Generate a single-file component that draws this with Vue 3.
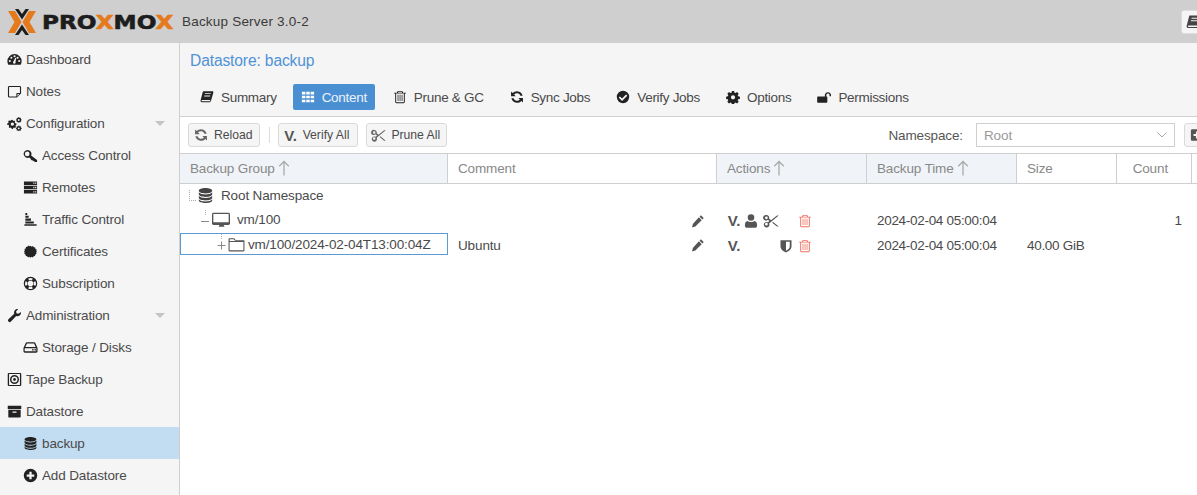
<script setup>
import { h } from 'vue'

const paths = {
  dashboard: 'M8 2.2A7.6 7.6 0 0 0 .4 9.8c0 1.3.3 2.6 1 3.7h13.2c.7-1.1 1-2.4 1-3.7A7.6 7.6 0 0 0 8 2.2ZM3 10.6a1.1 1.1 0 1 1 0-2.2 1.1 1.1 0 0 1 0 2.2Zm1.7-3.4a1.1 1.1 0 1 1 0-2.2 1.1 1.1 0 0 1 0 2.2ZM8 5.6a1.1 1.1 0 1 1 0-2.2 1.1 1.1 0 0 1 0 2.2Zm1 6.4a1.5 1.5 0 0 1-2.6-1.2L8.9 6l1 .3L9 10.6c.3.3.3 1 0 1.4Zm2.3-4.8a1.1 1.1 0 1 1 0-2.2 1.1 1.1 0 0 1 0 2.2Zm1.7 3.4a1.1 1.1 0 1 1 0-2.2 1.1 1.1 0 0 1 0 2.2Z',
  note: 'M2.5 2h11A1.5 1.5 0 0 1 15 3.500V10l-4.500 4.500h-8A1.500 1.500 0 0 1 1 13V3.500A1.500 1.500 0 0 1 2.500 2Zm0 1.200a.3.3 0 0 0-.3.3V13c0 .2.100.3.3.3H10V10.500c0-.5.500-1 1-1h2.800v-6a.3.3 0 0 0-.3-.3ZM11.200 13l2-2.300h-2Z',
  cogs: 'M5 4l1.100.2.500 1.100 1.100-.4 1 1-.5 1.100.8.700 1.100.2v1.400L9.500 9.700l-.4 1 .5 1.100-1 1-1.100-.5-.8.4-.3 1.200H5.100l-.4-1.200-.8-.4-1.100.5-1-1 .5-1.100-.4-1L.1 9.300V7.900l1.200-.3.400-.9-.5-1 1-1 1.100.4.800-.3ZM5.700 6.800a1.800 1.800 0 1 0 0 3.600 1.800 1.800 0 0 0 0-3.600ZM12.500 1l.5.100.2.700.6.300.7-.3.500.5-.3.700.3.600.7.2v.8l-.7.2-.3.600.3.700-.5.500-.7-.3-.6.300-.2.700h-.8l-.2-.7-.6-.3-.7.300-.5-.5.300-.7-.3-.6-.7-.2v-.8l.7-.2.300-.6-.3-.7.5-.5.7.3.6-.3.200-.7Zm0 2.200a1 1 0 1 0 0 2 1 1 0 0 0 0-2Zm0 6.800.5.100.2.700.6.300.7-.3.500.5-.3.700.3.600.7.2v.8l-.7.2-.3.600.3.700-.5.500-.7-.3-.6.300-.2.700h-.8l-.2-.7-.6-.3-.7.300-.5-.5.300-.7-.3-.6-.7-.2v-.8l.7-.2.300-.6-.3-.7.500-.5.700.3.600-.3.200-.7Zm0 2.200a1 1 0 1 0 0 2 1 1 0 0 0 0-2Z',
  key: 'M4.800 2a4.300 4.300 0 0 1 3.900 6l6.300 4.700v2.100h-2.500l-.9-1.100-1 .4-.7-1.200-1 .2-.6-1.400-1.500-1.500A4.300 4.300 0 1 1 4.800 2ZM4.500 3.800a2.500 2.500 0 1 0 0 5 2.500 2.500 0 0 0 0-5Z',
  server: 'M1 1.500h14v3.800H1Zm0 4.600h14v3.800H1Zm0 4.600h14v3.800H1ZM11 2.700v1.400h1.200V2.700Zm2 0v1.400h1.200V2.700Zm-2 4.600v1.400h1.200V7.300Zm2 0v1.400h1.200V7.300Zm-2 4.600v1.400h1.200v-1.400Zm2 0v1.400h1.200v-1.400Z',
  traffic: 'M2.500 1h2v2.200h-2Zm0 3h3.500v2.200H2.500Zm0 3h6v2.200h-6Zm0 3h9v2.200h-9Zm-1 3h13v1.600h-13Z',
  cert: 'M8 .8l1.400 1.200 1.700-.7.900 1.600 1.800.1.200 1.800 1.700.8-.6 1.700L16 8l-1.100 1.300.6 1.700-1.700.8-.2 1.800-1.800.1-.9 1.600-1.700-.7L8 15.800l-1.400-1.200-1.700.7-.9-1.600-1.800-.1-.2-1.800-1.700-.8.6-1.700L0 8l1.100-1.300-.6-1.700 1.700-.8.200-1.800 1.800-.1.900-1.600 1.700.7Z',
  ring: 'M8 .8a7.200 7.200 0 1 1 0 14.400A7.200 7.200 0 0 1 8 .8ZM8 5a3 3 0 1 0 0 6 3 3 0 0 0 0-6ZM5.600 2.700l.8 2a3.700 3.700 0 0 1 3.200 0l.8-2a5.800 5.800 0 0 0-4.800 0ZM13.300 5.600l-2 .8a3.700 3.700 0 0 1 0 3.200l2 .8a5.800 5.800 0 0 0 0-4.800ZM10.400 13.300l-.8-2a3.700 3.700 0 0 1-3.200 0l-.8 2a5.800 5.800 0 0 0 4.800 0ZM2.700 10.400l2-.8a3.700 3.700 0 0 1 0-3.200l-2-.8a5.800 5.800 0 0 0 0 4.800Z',
  wrench: 'M14.800 4.200c.3 1.700-.3 3.200-1.700 4-1.100.6-2.200.6-3.300.2l-5.600 6a1.800 1.800 0 0 1-2.700-2.500L7.700 6.200c-.4-1.100-.3-2.300.3-3.300.8-1.400 2.300-2 3.900-1.700l-2.200 2.300.4 2.100 2.100.5Z',
  hdd: 'M4 2.500h8c.5 0 .9.300 1.100.7l2.400 5.300v3.500c0 .8-.6 1.500-1.500 1.500H2c-.9 0-1.500-.7-1.500-1.500V8.500L2.900 3.200c.2-.4.600-.7 1.100-.7Zm.2 1.300L2.500 7.500h11l-1.700-3.700ZM2 8.800c-.1 0-.2.100-.2.200v2.800c0 .1.100.2.200.2h12c.1 0 .2-.1.200-.2V9c0-.1-.1-.2-.2-.2ZM10.500 9.500a.9.900 0 1 1 0 1.800.9.900 0 0 1 0-1.800Zm2.500 0a.9.900 0 1 1 0 1.800.9.900 0 0 1 0-1.800Z',
  tape: 'M2 1h12a1.200 1.200 0 0 1 1.200 1.200v11.600A1.200 1.200 0 0 1 14 15H2a1.200 1.200 0 0 1-1.200-1.200V2.200A1.200 1.200 0 0 1 2 1Zm.2 1.200v11.600h11.600V2.200ZM8 3.200a4.800 4.800 0 1 1 0 9.600 4.800 4.800 0 0 1 0-9.600Zm0 1.600a3.200 3.200 0 1 0 0 6.400 3.200 3.200 0 0 0 0-6.400Zm0 1.700a1.500 1.500 0 1 1 0 3 1.500 1.500 0 0 1 0-3Z',
  archive: 'M.8 1.800h14.400v3.400H.8Zm.6 4.300h13.200v7.400c0 .5-.4.900-.9.900H2.300a.9.900 0 0 1-.9-.9Zm4.800 2c-.3 0-.5.200-.5.500s.2.600.5.600h3.600c.3 0 .5-.3.500-.6s-.2-.5-.5-.5Z',
  db: 'M8 1c3.500 0 6.300 1.100 6.300 2.500S11.500 6 8 6 1.700 4.900 1.700 3.500 4.500 1 8 1Zm6.300 3.900v1.900C14.300 8.200 11.500 9.300 8 9.300S1.700 8.200 1.700 6.800V4.900C2.700 6.200 5.100 7 8 7s5.300-.8 6.300-2.100Zm0 3.300v1.900c0 1.400-2.800 2.500-6.300 2.500s-6.300-1.100-6.300-2.500V8.200c1 1.300 3.400 2.100 6.300 2.100s5.300-.8 6.300-2.100Zm0 3.300v1.100C14.300 14 11.500 15 8 15s-6.300-1-6.300-2.400v-1.100c1 1.300 3.400 2.100 6.300 2.100s5.300-.8 6.300-2.100Z',
  plus: 'M8 .8a7.200 7.200 0 1 1 0 14.400A7.200 7.200 0 0 1 8 .8ZM6.800 4v2.800H4v2.400h2.800V12h2.400V9.200H12V6.800H9.200V4Z',
  book: 'M4 1.500h10.200c.9 0 1.300.7 1 1.500l-2.600 9.300c-.3 1-1 1.700-2 1.700H2.300C1 14 .3 13 .7 11.800L3 2.800c.2-.8.500-1.300 1-1.300Zm1.700 2.200-.3 1h6.800l.3-1Zm-.7 2.600-.3 1h6.800l.3-1ZM2.500 11.500c-.5 0-.8.500-.6 1 .1.300.4.400.8.400h8c.4 0 .6-.2.800-.6l.5-.8Z',
  th: 'M1 2h4v3H1Zm5 0h4v3H6Zm5 0h4v3h-4ZM1 6.500h4v3H1Zm5 0h4v3H6Zm5 0h4v3h-4ZM1 11h4v3H1Zm5 0h4v3H6Zm5 0h4v3h-4Z',
  trash: 'M6 1h4c.5 0 .8.200 1 .7l.6 1.300H14.500a.5.500 0 0 1 0 1.100h-1v9.400c0 .9-.6 1.600-1.300 1.600H3.800c-.7 0-1.300-.7-1.300-1.600V4.100h-1a.5.500 0 0 1 0-1.100h2.900l.6-1.300c.2-.5.500-.7 1-.7Zm-.3 2h4.600l-.4-.9H6.100ZM3.600 4.100v9.400c0 .3.100.5.300.5h8.200c.2 0 .3-.2.300-.5V4.100ZM5.300 5.500h.9v7h-.9Zm2.300 0h.9v7h-.9Zm2.300 0h.9v7h-.9Z',
  refresh: 'M14.400 6.600h-2.500a4.200 4.200 0 0 0-7.200-1.400L6.500 7H1.200V1.700L3 3.500a6.700 6.700 0 0 1 11.400 3.100ZM1.600 9.400h2.500a4.200 4.200 0 0 0 7.200 1.400L9.500 9h5.300v5.300L13 12.500A6.700 6.700 0 0 1 1.600 9.400Z',
  check: 'M8 .9a7.100 7.100 0 1 1 0 14.200A7.100 7.100 0 0 1 8 .9Zm3.500 4.200L6.900 9.700 4.500 7.300 3.100 8.700l3.800 3.800 6-6Z',
  gear: 'M6.700 1h2.600l.4 2 1.200.5 1.700-1.100 1.900 1.900-1.100 1.700.5 1.200 2 .4v2.600l-2 .4-.5 1.200 1.100 1.700-1.900 1.900-1.700-1.100-1.200.5-.4 2H6.700l-.4-2-1.200-.5-1.700 1.100-1.900-1.900 1.100-1.700-.5-1.200-2-.4V7.600l2-.4.500-1.200-1.100-1.700 1.900-1.900 1.700 1.100 1.200-.5ZM8 6a2.400 2.400 0 1 0 0 4.800A2.400 2.400 0 0 0 8 6Z',
  unlock: 'M1 7.500h8V5.200A3.700 3.700 0 0 1 16 5v2.200h-1.700V5a2 2 0 0 0-3.600 0v2.500h.3c.5 0 .8.400.8.800v5.400c0 .5-.3.800-.8.800H1c-.5 0-.8-.3-.8-.8V8.300c0-.4.300-.8.800-.8Z',
  scissors: 'M3.400 2a2.800 2.800 0 0 1 2.700 3.500L8 7.200 14 2.500h1.700L6.100 10.500A2.800 2.800 0 1 1 4.900 9.300L6.400 8 4.900 6.700A2.800 2.800 0 1 1 3.400 2Zm0 1.400a1.400 1.400 0 1 0 0 2.800 1.400 1.400 0 0 0 0-2.800Zm0 6.400a1.400 1.400 0 1 0 0 2.800 1.400 1.400 0 0 0 0-2.800Zm6.700-.9 5.600 4.600H14L9.200 9.700Z',
  pencil: 'M11.300 1.500 14.500 4.700 13 6.200 9.800 3ZM9 3.800l3.200 3.200-7.200 7.200-3.800 1.100.900-3.900Z',
  user: 'M8 1.200a3.300 3.300 0 1 1 0 6.600 3.300 3.300 0 0 1 0-6.600ZM4.500 8c1 .8 2.200 1.100 3.500 1.100s2.500-.3 3.500-1.100c1.700.1 2.600 2 2.600 4.500 0 1.400-.9 2.300-2.200 2.300H4.100c-1.300 0-2.200-.9-2.200-2.300C1.900 10 2.800 8.100 4.500 8Z',
  shield: 'M2.200 1.500h11.600c.3 0 .5.200.5.500v6.500c0 3.500-3.700 5.700-6.300 6.800-2.600-1.100-6.300-3.300-6.300-6.800V2c0-.3.200-.5.500-.5ZM8 3v10.500c1.900-.9 4.300-2.600 4.300-4.900V3Z',
  desktop: 'M1.300 1.500h13.400c.7 0 1.300.6 1.300 1.300v8.400c0 .7-.6 1.300-1.300 1.300h-4.200c0 .7.400 1 .7 1.500H5.800c.3-.5.700-.8.700-1.500H1.300c-.7 0-1.300-.6-1.300-1.300V2.800c0-.7.600-1.300 1.300-1.300Zm-.1 1.200v7.300h13.600V2.700Z',
  folder: 'M1.500 2h4.300l1.400 1.700h7.300c.5 0 1 .4 1 1v8.800c0 .5-.5 1-1 1h-13c-.5 0-1-.5-1-1V3c0-.6.500-1 1-1Zm.1 1v1.600H14.900v-.1H6.700L5.300 3ZM1.500 5.600v7.900h13V5.600Z',
  addns: 'M2.500 1.500h11c.8 0 1.500.7 1.500 1.500v10c0 .8-.7 1.500-1.500 1.500h-11c-.8 0-1.500-.7-1.500-1.500V3c0-.8.700-1.500 1.500-1.500ZM6.800 4v2.800H4v2.400h2.800V12h2.400V9.200H12V6.800H9.200V4Z'
}

const Ico = (props) =>
  h('svg', { viewBox: '0 0 16 16', class: 'ico', width: props.s || 14, height: props.s || 14, 'aria-hidden': 'true' }, [
    h('path', { d: paths[props.n], fill: 'currentColor', 'fill-rule': 'evenodd' })
  ])
Ico.props = ['n', 's']

const nav = [
  { label: 'Dashboard', icon: 'dashboard' },
  { label: 'Notes', icon: 'note' },
  { label: 'Configuration', icon: 'cogs', caret: true },
  { label: 'Access Control', icon: 'key', sub: true },
  { label: 'Remotes', icon: 'server', sub: true },
  { label: 'Traffic Control', icon: 'traffic', sub: true },
  { label: 'Certificates', icon: 'cert', sub: true, size: 13 },
  { label: 'Subscription', icon: 'ring', sub: true },
  { label: 'Administration', icon: 'wrench', caret: true },
  { label: 'Storage / Disks', icon: 'hdd', sub: true },
  { label: 'Tape Backup', icon: 'tape' },
  { label: 'Datastore', icon: 'archive' },
  { label: 'backup', icon: 'db', sub: true, active: true },
  { label: 'Add Datastore', icon: 'plus', sub: true }
]

const tabs = [
  { label: 'Summary', icon: 'book' },
  { label: 'Content', icon: 'th', active: true },
  { label: 'Prune & GC', icon: 'trash' },
  { label: 'Sync Jobs', icon: 'refresh' },
  { label: 'Verify Jobs', icon: 'check' },
  { label: 'Options', icon: 'gear' },
  { label: 'Permissions', icon: 'unlock' }
]

const cols = [
  { label: 'Backup Group', sorted: true },
  { label: 'Comment' },
  { label: 'Actions', sorted: true },
  { label: 'Backup Time', sorted: true },
  { label: 'Size' },
  { label: 'Count', right: true }
]
</script>

<template>
  <div class="page">
    <header class="top">
      <div class="logo">
        <svg class="mark" viewBox="0 0 28 26" width="28" height="26" aria-hidden="true">
          <path d="M0 2h7l6.500 11L7 24H0l6.500-11Z" fill="#e57a1c" />
          <path d="M28 2h-7l-6.500 11L21 24h7l-6.500-11Z" fill="#e57a1c" />
          <path d="M7 0h3.500L14 5l3.500-5H21l-7 10.500Z" fill="#1d1d1d" />
          <path d="M7 26h3.500L14 21l3.500 5H21l-7-10.500Z" fill="#1d1d1d" />
        </svg>
        <span class="word"><span class="wd">PRO</span><span class="or">X</span><span class="wd">MO</span><span class="or">X</span></span>
      </div>
      <span class="product">Backup Server 3.0-2</span>
      <span class="spacer"></span>
      <button class="docbtn"><Ico n="book" :s="16" /></button>
    </header>

    <div class="body">
      <aside class="side">
        <div v-for="item in nav" :key="item.label" class="nav" :class="{ sub: item.sub, active: item.active }">
          <span class="nicon"><Ico :n="item.icon" :s="item.size || 15" /></span>
          <span class="navtext">{{ item.label }}</span>
          <span v-if="item.caret" class="caret"></span>
        </div>
      </aside>

      <main class="main">
        <div class="panelhead">
          <h1 class="title">Datastore: backup</h1>
          <nav class="tabs">
            <div v-for="t in tabs" :key="t.label" class="tab" :class="{ on: t.active }">
              <Ico :n="t.icon" :s="14" />
              <span>{{ t.label }}</span>
            </div>
          </nav>
        </div>

        <div class="toolbar">
          <button class="btn tight"><Ico n="refresh" :s="14" class="grey" />Reload</button>
          <span class="sep"></span>
          <button class="btn"><b class="vv">V.</b>Verify All</button>
          <button class="btn tight"><Ico n="scissors" :s="15" class="grey snip" />Prune All</button>
          <span class="spacer"></span>
          <label class="nslabel">Namespace:</label>
          <div class="combo"><span>Root</span>
            <svg width="10" height="6" viewBox="0 0 10 6" aria-hidden="true"><path d="M.5.5 5 5 9.500.5" fill="none" stroke="#aaa" /></svg>
          </div>
          <button class="btn iconbtn"><Ico n="addns" :s="14" /></button>
        </div>

        <div class="grid ghead">
          <div v-for="c in cols" :key="c.label" class="hc" :class="{ sorted: c.sorted, right: c.right }">
            {{ c.label }}
            <svg v-if="c.sorted" class="arrow" width="12" height="16" viewBox="0 0 12 16" aria-hidden="true"><path d="M6 15.500V1.500M1.200 6.300 6 1.500l4.800 4.800" fill="none" stroke="#aaa" stroke-width="1.300" /></svg>
          </div>
          <div class="hc last"></div>
        </div>

        <div class="grid row r0">
          <div class="tree t0">
            <svg class="conn" width="9" height="14" viewBox="0 0 9 14" aria-hidden="true"><path d="M1.500 1v10.500H8" fill="none" stroke="#aaa" stroke-dasharray="1 1" /></svg>
            <Ico n="db" :s="17" class="dbi" />
            <span class="rootlabel">Root Namespace</span>
          </div>
        </div>

        <div class="grid row r1">
          <div class="tree t1">
            <svg class="conn" width="12" height="20" viewBox="0 0 12 20" aria-hidden="true"><path d="M5.500 0v6" stroke="#aaa" stroke-dasharray="1 1" /><path d="M1 11.500h8" stroke="#888" /></svg>
            <Ico n="desktop" :s="18" class="dim" />
            <span class="vmlabel">vm/100</span>
          </div>
          <div class="cm"><Ico n="pencil" :s="14" class="dim" /></div>
          <div class="acts">
            <b class="vv">V.</b>
            <Ico n="user" :s="16" class="dim" />
            <Ico n="scissors" :s="16" class="dim" />
            <span></span>
            <Ico n="trash" :s="14" class="red" />
          </div>
          <div class="c date">2024-02-04 05:00:04</div>
          <div class="c"></div>
          <div class="c num">1</div>
        </div>

        <div class="grid row r2">
          <div class="tree t2 sel">
            <svg class="conn" width="12" height="20" viewBox="0 0 12 20" aria-hidden="true"><path d="M5.500 0v6" stroke="#aaa" stroke-dasharray="1 1" /><path d="M1.500 11.500h8M5.500 7.500v8" stroke="#888" /></svg>
            <Ico n="folder" :s="17" class="dim" />
            <span class="snap">vm/100/2024-02-04T13:00:04Z</span>
          </div>
          <div class="cm cmtext"><span>Ubuntu</span><Ico n="pencil" :s="14" class="dim" /></div>
          <div class="acts">
            <b class="vv">V.</b>
            <span></span>
            <span></span>
            <Ico n="shield" :s="14" class="dim" />
            <Ico n="trash" :s="14" class="red" />
          </div>
          <div class="c date">2024-02-04 05:00:04</div>
          <div class="c date">40.00 GiB</div>
          <div class="c"></div>
        </div>
      </main>
    </div>
  </div>
</template>

<style>
html, body { margin: 0; padding: 0; background: #fff; overflow: hidden; }
</style>

<style scoped>
.page {
  width: 1197px;
  height: 495px;
  overflow: hidden;
  display: flex;
  flex-direction: column;
  font-family: "Liberation Sans", Arial, sans-serif;
  font-size: 13.5px;
  letter-spacing: -0.13px;
  color: #4a4a4a;
}
.ico { display: block; flex: none; }
.spacer { flex: 1; }

.top {
  height: 43px;
  flex: none;
  box-sizing: border-box;
  background: #cfcfcf;
  display: flex;
  align-items: center;
  padding-left: 8px;
}
.logo { display: flex; align-items: center; width: 174px; flex: none; }
.mark { flex: none; }
.word {
  margin-left: 6px;
  font-family: "DejaVu Sans", sans-serif;
  font-weight: 700;
  font-size: 19px;
  letter-spacing: 0;
  line-height: 20px;
  transform: scaleX(1.22);
  transform-origin: left center;
  white-space: nowrap;
  -webkit-text-stroke: .6px currentColor;
}
.wd { color: #1d1d1d; }
.or { color: #e57a1c; }
.product { color: #3a3a3a; white-space: nowrap; letter-spacing: 0.2px; }
.docbtn {
  width: 40px;
  height: 24px;
  flex: none;
  margin-right: -24px;
  padding: 0 0 0 4px;
  border: 1px solid #ddd;
  border-radius: 3px;
  background: #f5f5f5;
  color: #444;
  display: flex;
  align-items: center;
}

.body { flex: 1; display: flex; min-height: 0; }
.side {
  width: 180px;
  flex: none;
  box-sizing: border-box;
  background: #f5f5f5;
  border-right: 1px solid #cfcfcf;
}
.nav {
  height: 32px;
  display: flex;
  align-items: center;
  padding-left: 7px;
  gap: 4px;
  color: #4a4a4a;
}
.nicon { width: 15px; display: flex; justify-content: center; flex: none; color: #222; }
.nav.sub { padding-left: 23px; }
.nav.active { background: #c2ddf2; }
.navtext { white-space: nowrap; }
.caret {
  margin-left: auto;
  margin-right: 14px;
  width: 0;
  height: 0;
  border-left: 5px solid transparent;
  border-right: 5px solid transparent;
  border-top: 5px solid #c4c4c4;
}

.main { flex: 1; min-width: 0; display: flex; flex-direction: column; }
.panelhead {
  height: 74px;
  flex: none;
  box-sizing: border-box;
  background: #f5f5f5;
  border-bottom: 1px solid #cfcfcf;
  display: flex;
  flex-direction: column;
}
.title {
  margin: 0;
  padding: 9px 0 0 10px;
  height: 41px;
  box-sizing: border-box;
  font-size: 15.6px;
  font-weight: 400;
  line-height: 18px;
  color: #4f92d6;
}
.tabs { display: flex; gap: 10px; padding-left: 12px; letter-spacing: -0.3px; }
.tab {
  height: 26px;
  padding: 0 8px;
  display: flex;
  align-items: center;
  gap: 7px;
  border-radius: 2px;
  white-space: nowrap;
  color: #4a4a4a;
}
.tab:first-child { margin-right: -2px; }
.tab .ico { color: #222; }
.tab.on { background: #4b8fd3; color: #eaf2fa; }
.tab.on .ico { color: #fff; }

.toolbar {
  height: 36px;
  flex: none;
  box-sizing: border-box;
  display: flex;
  align-items: center;
  padding-left: 8px;
  gap: 8px;
}
.btn {
  height: 24px;
  box-sizing: border-box;
  padding: 0 8px 0 5px;
  display: flex;
  align-items: center;
  gap: 6px;
  font-family: inherit;
  font-size: 12.2px;
  letter-spacing: 0;
  color: #4a4a4a;
  background: #f5f5f5;
  border: 1px solid #dadada;
  border-radius: 3px;
  white-space: nowrap;
}
.btn.tight { padding-right: 6px; }
.grey { color: #666; }
.snip { margin: 0 -1px 0 -1px; }
.sep { width: 1px; height: 16px; background: #ddd; margin-left: 1px; }
.vv { font-weight: 700; color: #555; width: 14px; text-align: center; font-size: 15px; }
.btn .vv { margin-right: -1px; }
.nslabel { margin-right: 5px; color: #555; }
.combo {
  width: 199px;
  height: 24px;
  box-sizing: border-box;
  border: 1px solid #cfcfcf;
  padding: 0 7px;
  display: flex;
  align-items: center;
  justify-content: space-between;
  color: #999;
  flex: none;
  background: #fff;
}
.iconbtn { width: 40px; flex: none; margin-left: 1px; margin-right: -27px; padding-left: 5px; }
.iconbtn .ico { color: #555; }

.grid {
  display: grid;
  grid-template-columns: 268px 269px 150px 150px 100px 75px 1fr;
  align-items: center;
}
.ghead {
  height: 31px;
  box-sizing: border-box;
  border-top: 1px solid #cfcfcf;
  border-bottom: 1px solid #cfcfcf;
  align-items: stretch;
  flex: none;
}
.hc {
  box-sizing: border-box;
  border-right: 1px solid #cfcfcf;
  padding-left: 10px;
  padding-bottom: 1px;
  display: flex;
  align-items: center;
  gap: 3px;
  color: #888;
  white-space: nowrap;
}
.hc.sorted { background: #f0f4f8; }
.hc.right { justify-content: flex-end; padding-right: 23px; }
.hc.last { border-right: 0; }
.row { flex: none; }
.r0 { height: 24px; }
.r1 { height: 25px; }
.r2 { height: 22px; }
.r2 > .c, .r2 > .cm { padding-top: 2px; }
.r2 > .acts { padding-top: 3px; }
.tree { display: flex; align-items: center; height: 100%; box-sizing: border-box; white-space: nowrap; }
.t0 { padding-left: 8px; padding-bottom: 1px; grid-column: 1 / 3; }
.t1 { padding-left: 20px; padding-bottom: 2px; }
.t2 { padding-left: 36px; }
.sel { border: 1px solid #5b9ad5; width: 268px; padding-left: 35px; }
.rootlabel { margin-left: 7px; }
.dbi { color: #444; }
.vmlabel { margin-left: 7px; }
.snap { margin-left: 3px; }
.dim { color: #555; }
.red { color: #ef7060; }
.cm { display: flex; justify-content: flex-end; padding-right: 12px; }
.cmtext { justify-content: space-between; padding-left: 10px; }
.acts {
  display: grid;
  grid-template-columns: 16px 18px 21px 10px 28px;
  padding-left: 9px;
  align-items: center;
  justify-items: center;
}
.c { padding-left: 10px; white-space: nowrap; }
.date { letter-spacing: -0.3px; }
.num { text-align: right; padding-right: 10px; }
</style>
